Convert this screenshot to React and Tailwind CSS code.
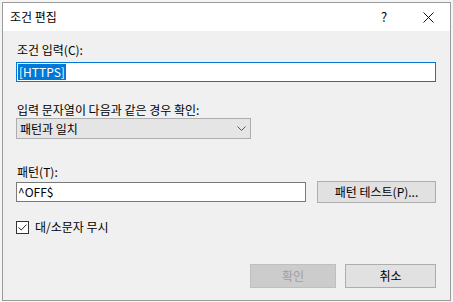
import React from 'react';

const font = { fontFamily: '"Noto Sans CJK KR", "Noto Sans", sans-serif' };

export default function App() {
  return (
    <div className="w-[453px] h-[302px] bg-[#f4f4f4] pt-[2px] pl-[2px] overflow-hidden text-[12px] leading-[16px] text-black" style={font}>
      <div className="w-[449px] h-[299px] border border-[#9a9a9a] bg-[#f0f0f0] flex flex-col">
        {/* Title bar */}
        <div className="h-[28px] bg-white flex items-center pl-[7px] shrink-0">
          <span className="flex-1">조건 편집</span>
          <span className="w-[10px] mr-[34px] text-center text-[13px]">?</span>
          <svg width="11" height="11" viewBox="0 0 11 11" className="mr-[16px]">
            <path d="M0.5 0.5 L10.5 10.5 M10.5 0.5 L0.5 10.5" stroke="#111" strokeWidth="1" />
          </svg>
        </div>

        {/* Body */}
        <div className="flex-1 flex flex-col pl-[13px] pr-[14px] pt-[11px] pb-[12px]">
          <div className="pl-[1px]">조건 입력(C):</div>
          <div className="mt-[4px] h-[20px] bg-white border border-[#0078d7] flex items-center pl-[1px]">
            <span className="bg-[#0078d7] text-white px-[1px] leading-[16px]">[HTTPS]</span>
          </div>

          <div className="mt-[20px] pl-[1px]">입력 문자열이 다음과 같은 경우 확인:</div>
          <div className="w-[235px] h-[21px] bg-[#e5e5e5] border border-[#adadad] flex items-center pl-[3px] pr-[4px]">
            <span className="flex-1">패턴과 일치</span>
            <svg width="9" height="5" viewBox="0 0 9 5">
              <path d="M0.5 0.5 L4.5 4.5 L8.5 0.5" stroke="#555" strokeWidth="1" fill="none" />
            </svg>
          </div>

          <div className="mt-[25px] pl-[1px]">패턴(T):</div>
          <div className="mt-[1px] flex items-center gap-[11px]">
            <div className="w-[290px] h-[20px] bg-white border border-[#7a7a7a] flex items-center pl-[1px]">
              <span>^OFF$</span>
            </div>
            <button className="w-[119px] h-[22px] bg-[#e1e1e1] border border-[#adadad] flex items-center justify-center">
              패턴 테스트(P)...
            </button>
          </div>

          <div className="mt-[16px] flex items-center h-[16px]">
            <div className="w-[13px] h-[13px] bg-white border border-[#333] flex items-center justify-center">
              <svg width="9" height="7" viewBox="0 0 9 7">
                <path d="M0.5 3.5 L3.2 6 L8.5 0.6" stroke="#222" strokeWidth="1" fill="none" />
              </svg>
            </div>
            <span className="ml-[6px]">대/소문자 무시</span>
          </div>

          <div className="flex-1" />
          <div className="flex justify-end gap-[9px]">
            <button className="w-[86px] h-[24px] bg-[#cccccc] border border-[#bfbfbf] text-[#a0a0a0] flex items-center justify-center">
              확인
            </button>
            <button className="w-[91px] h-[24px] bg-[#e1e1e1] border border-[#adadad] flex items-center justify-center">
              취소
            </button>
          </div>
        </div>
      </div>
    </div>
  );
}
